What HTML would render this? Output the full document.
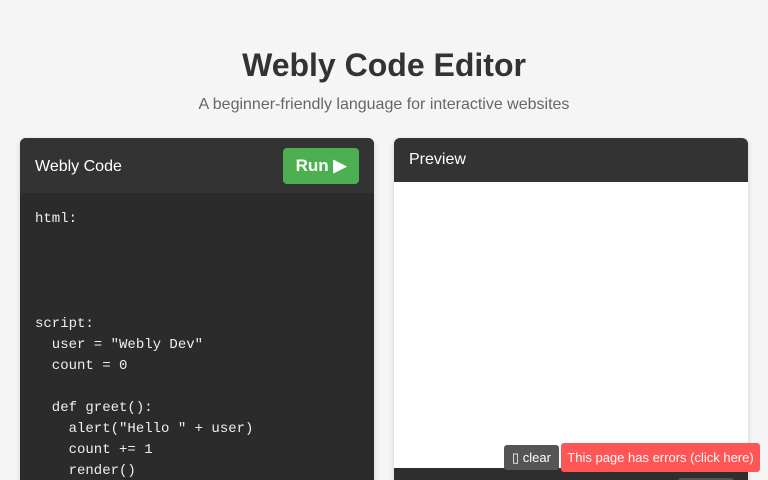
<!DOCTYPE html>
<html><head><style>
html,body{margin:0;width:768px;height:480px;overflow:hidden}
body{background:#f5f5f5;font-family:"Liberation Sans",sans-serif;position:relative}
h1{margin:0;position:absolute;top:47px;width:100%;text-align:center;font-size:32px;color:#333;font-weight:bold}
.sub{position:absolute;top:96px;width:100%;text-align:center;font-size:16px;color:#666}
.panel{position:absolute;top:138px;width:354px;height:342px;border-radius:6px 6px 0 0;overflow:hidden;box-shadow:0 2px 6px rgba(0,0,0,.15)}
.l{left:20px;background:#2b2b2b}
.lh{height:55px;background:#333;color:#fff;font-size:16px;display:flex;align-items:center;justify-content:space-between;padding:0 15px}
.lh>span:first-child{margin-top:2px}
.run{background:#4caf50;color:#fff;font-weight:bold;font-size:17px;width:76px;text-align:center;height:36px;line-height:36px;border-radius:4px;margin-top:1px}
pre{margin:0;padding:16px 15px;font-family:"Liberation Mono",monospace;font-size:14px;line-height:21px;color:#eee;height:255px;overflow:hidden}
.r{left:394px;background:#fff}
.rh{height:44px;background:#333;color:#fff;font-size:16px;line-height:44px;padding-left:15px}
.rb{position:absolute;top:330px;left:0;right:0;height:12px;background:#2e2e2e;overflow:hidden}
.clear{position:absolute;left:504px;top:445px;height:25px;line-height:25px;padding:0 8px;background:#555;color:#fff;font-size:13px;border-radius:3px}
.err{position:absolute;left:561px;top:443px;width:199px;height:29px;line-height:29px;text-align:center;background:#f55;color:#fff;font-size:13px;border-radius:3px;white-space:nowrap}
</style></head><body>
<h1>Webly Code Editor</h1>
<div class="sub">A beginner-friendly language for interactive websites</div>
<div class="panel l"><div class="lh"><span>Webly Code</span><span class="run">Run ▶</span></div>
<pre>html:




script:
  user = "Webly Dev"
  count = 0

  def greet():
    alert("Hello " + user)
    count += 1
    render()</pre></div>
<div class="panel r"><div class="rh">Preview</div><div class="rb"><div style="position:absolute;left:284px;top:10px;width:56px;height:10px;background:#555;border-radius:3px"></div></div></div>
<div class="clear">▯ clear</div>
<div class="err">This page has errors (click here)</div>
</body></html>
